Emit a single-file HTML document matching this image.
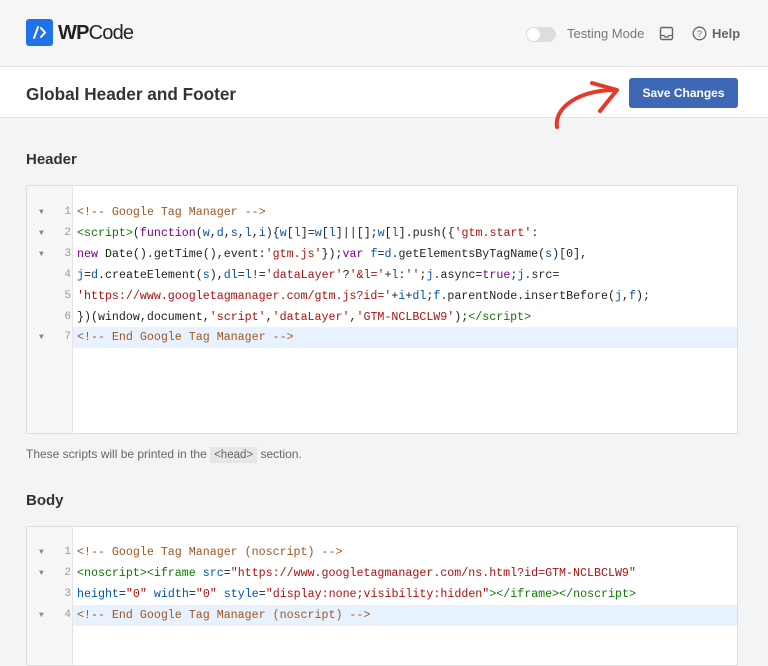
<!DOCTYPE html>
<html><head><meta charset="utf-8"><style>
*{margin:0;padding:0;box-sizing:border-box}
body{width:768px;height:656px;overflow:hidden;background:#f3f4f6;font-family:"Liberation Sans",sans-serif;position:relative}
.top{position:absolute;left:0;top:0;width:768px;height:67px;background:#f6f6f6;border-bottom:1px solid #e2e2e2}
.bar{position:absolute;left:0;top:67px;width:768px;height:51px;background:#fff;border-bottom:1px solid #e2e2e2}
.abs{position:absolute}
.ed{position:absolute;left:26px;width:712px;background:#fff;border:1px solid #dedede;border-radius:2px;overflow:hidden}
.gut{position:absolute;left:0;top:0;bottom:0;width:46px;background:#f7f7f7;border-right:1px solid #e4e4e4}
.ln{position:absolute;left:0;width:712px;height:21px;font-family:"Liberation Mono",monospace;font-size:11.65px;line-height:21px;white-space:pre;color:#222}
.ln .n{position:absolute;left:29px;width:15px;text-align:right;color:#999;font-size:11px}
.ln .f{position:absolute;left:12px;color:#888;font-size:8px}
.ln .c{position:absolute;left:50px}
.hl{background:#e8f2ff}
.cm{color:#a0561e}.tg{color:#170}.kw{color:#708}.v{color:#05a}.s{color:#a11}
h2{position:absolute;left:26px;font-size:15px;font-weight:bold;color:#333}
</style></head><body>
<div class="top"></div>
<div class="abs" style="left:26px;top:19px;width:27px;height:27px;background:#1e73e8;border-radius:3px"></div>
<svg class="abs" style="left:26px;top:19px" width="27" height="27"><path d="M8 19 L12 8 M15 9 L19 13.5 L15 18" stroke="#fff" stroke-width="2" fill="none" stroke-linecap="round"/></svg>
<div class="abs" style="left:58px;top:22px;font-size:20px;color:#222;letter-spacing:-0.8px"><b>WP</b>Code</div>
<div class="abs" style="left:526px;top:27px;width:30px;height:15px;border-radius:8px;background:#ddd"></div>
<div class="abs" style="left:527px;top:28px;width:13px;height:13px;border-radius:7px;background:#fff"></div>
<div class="abs" style="left:567px;top:26px;font-size:13px;color:#777">Testing Mode</div>
<svg class="abs" style="left:659px;top:26px" width="15" height="15"><rect x="1.5" y="1.5" width="12" height="12" rx="1.5" fill="none" stroke="#666" stroke-width="1.4"/><path d="M1.5 9.5 H5 L6 11 H9 L10 9.5 H13.5" fill="none" stroke="#666" stroke-width="1.3"/></svg>
<svg class="abs" style="left:692px;top:26px" width="15" height="15"><circle cx="7.5" cy="7.5" r="6.3" fill="none" stroke="#666" stroke-width="1.3"/><text x="7.5" y="11" font-size="9" text-anchor="middle" fill="#666" font-family="Liberation Sans">?</text></svg>
<div class="abs" style="left:712px;top:26px;font-size:13px;color:#666;font-weight:bold">Help</div>
<div class="bar"></div>
<div class="abs" style="left:26px;top:84px;font-size:17.2px;font-weight:bold;color:#333">Global Header and Footer</div>
<div class="abs" style="left:629px;top:78px;width:109px;height:30px;background:#3e68b5;border-radius:3px;color:#fff;font-size:12px;font-weight:bold;text-align:center;line-height:30px">Save Changes</div>
<svg class="abs" style="left:548px;top:78px" width="76" height="52"><path d="M9 49 C6 30 30 12 68 12" stroke="#e8382a" stroke-width="4" fill="none" stroke-linecap="round"/><path d="M44 5 L69 12 L52 33" stroke="#e8382a" stroke-width="4" fill="none" stroke-linecap="round" stroke-linejoin="round"/></svg>
<h2 style="top:151px">Header</h2>
<div class="ed" style="top:185px;height:249px"><div class="gut"></div>
<div class="ln" style="top:16px"><span class="f">▼</span><span class="n">1</span><span class="c cm">&lt;!-- Google Tag Manager --&gt;</span></div>
<div class="ln" style="top:37px"><span class="f">▼</span><span class="n">2</span><span class="c"><span class="tg">&lt;script&gt;</span>(<span class="kw">function</span>(<span class="v">w</span>,<span class="v">d</span>,<span class="v">s</span>,<span class="v">l</span>,<span class="v">i</span>){<span class="v">w</span>[<span class="v">l</span>]=<span class="v">w</span>[<span class="v">l</span>]||[];<span class="v">w</span>[<span class="v">l</span>].push({<span class="s">'gtm.start'</span>:</span></div>
<div class="ln" style="top:58px"><span class="f">▼</span><span class="n">3</span><span class="c"><span class="kw">new</span> Date().getTime(),event:<span class="s">'gtm.js'</span>});<span class="kw">var</span> <span class="v">f</span>=<span class="v">d</span>.getElementsByTagName(<span class="v">s</span>)[0],</span></div>
<div class="ln" style="top:79px"><span class="n">4</span><span class="c"><span class="v">j</span>=<span class="v">d</span>.createElement(<span class="v">s</span>),<span class="v">dl</span>=<span class="v">l</span>!=<span class="s">'dataLayer'</span>?<span class="s">'&amp;l='</span>+<span class="v">l</span>:<span class="s">''</span>;<span class="v">j</span>.async=<span class="kw">true</span>;<span class="v">j</span>.src=</span></div>
<div class="ln" style="top:100px"><span class="n">5</span><span class="c"><span class="s">'https://www.googletagmanager.com/gtm.js?id='</span>+<span class="v">i</span>+<span class="v">dl</span>;<span class="v">f</span>.parentNode.insertBefore(<span class="v">j</span>,<span class="v">f</span>);</span></div>
<div class="ln" style="top:121px"><span class="n">6</span><span class="c">})(window,document,<span class="s">'script'</span>,<span class="s">'dataLayer'</span>,<span class="s">'GTM-NCLBCLW9'</span>);<span class="tg">&lt;/script&gt;</span></span></div>
<div class="ln" style="top:141px"><span class="f">▼</span><span class="n">7</span><span class="c hl" style="right:0;left:46px;padding-left:4px"><span class="cm">&lt;!-- End Google Tag Manager --&gt;</span></span></div>
</div>
<div class="abs" style="left:26px;top:447px;font-size:12px;color:#666">These scripts will be printed in the <span style="background:#e6e6e6;padding:2px 4px;font-size:11.5px">&lt;head&gt;</span> section.</div>
<h2 style="top:492px">Body</h2>
<div class="ed" style="top:526px;height:140px"><div class="gut"></div>
<div class="ln" style="top:15px"><span class="f">▼</span><span class="n">1</span><span class="c cm">&lt;!-- Google Tag Manager (noscript) --&gt;</span></div>
<div class="ln" style="top:36px"><span class="f">▼</span><span class="n">2</span><span class="c"><span class="tg">&lt;noscript&gt;&lt;iframe</span> <span class="v">src</span>=<span class="s">"https://www.googletagmanager.com/ns.html?id=GTM-NCLBCLW9"</span></span></div>
<div class="ln" style="top:57px"><span class="n">3</span><span class="c"><span class="v">height</span>=<span class="s">"0"</span> <span class="v">width</span>=<span class="s">"0"</span> <span class="v">style</span>=<span class="s">"display:none;visibility:hidden"</span><span class="tg">&gt;&lt;/iframe&gt;&lt;/noscript&gt;</span></span></div>
<div class="ln" style="top:78px"><span class="f">▼</span><span class="n">4</span><span class="c hl" style="right:0;left:46px;padding-left:4px"><span class="cm">&lt;!-- End Google Tag Manager (noscript) --&gt;</span></span></div>
</div>
</body></html>
